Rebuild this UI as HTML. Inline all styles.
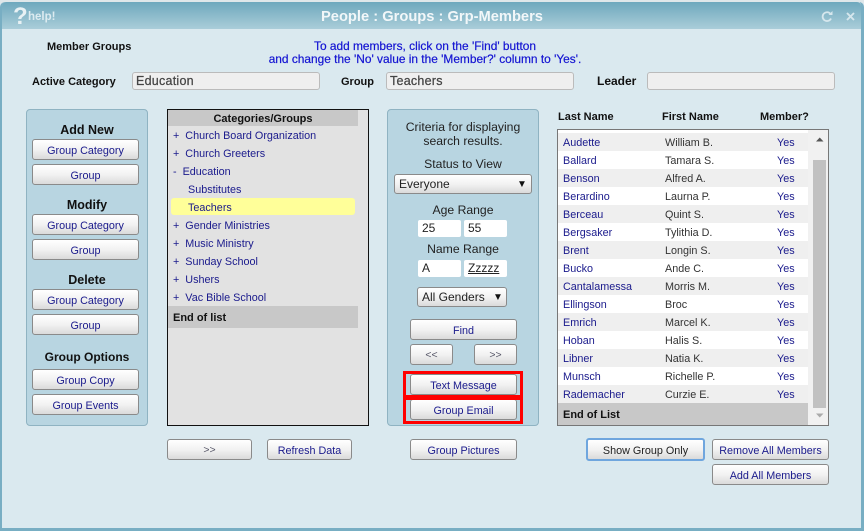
<!DOCTYPE html>
<html><head><meta charset="utf-8">
<style>
html,body{margin:0;padding:0}
body{width:864px;height:531px;overflow:hidden;background:#dae9ef;position:relative;font-family:"Liberation Sans",sans-serif;font-size:12px;color:#111}
div,span{position:absolute;box-sizing:border-box;white-space:nowrap}
.b{height:21px;border:1px solid #8a8a8a;border-radius:3px;background:linear-gradient(#fff,#f2f2f2 50%,#dadada);color:#1a1a8c;text-align:center;line-height:22px;font-size:10.8px}
.b.s{font-size:10.5px;color:#556;line-height:21px}
.p{background:#b8d5e1;border:1px solid #8fb3c2;border-radius:4px}
.h{font-size:12.5px;font-weight:bold;text-align:center;color:#111}
.l{font-size:11px;font-weight:bold;color:#111}
.f{height:18px;background:#efefef;border:1px solid #bbb;border-radius:3px;color:#444;font-size:12.5px;line-height:16px;padding-left:3px;letter-spacing:.25px;-webkit-text-stroke:.25px #444}
.t{color:#1a1a8c;font-size:10.8px;line-height:14px;height:14px}
.c{text-align:center;color:#222;font-size:12.2px}
.i{background:#fff;border-radius:2px;height:17px;font-size:12px;line-height:17px;padding-left:4px;color:#222}
.r{left:1px;width:250px;height:18px;line-height:20px;font-size:10.8px;background:#efefef}
.r.w{background:#fff}
.r span{top:0;color:#1a1a8c}
.r span+span{left:107px;color:#333}
.r span+span+span{left:219px;color:#1a1a8c}
.r span:first-child{left:5px}
</style></head><body>
<div style="left:0;top:0;width:864px;height:3px;background:#dfe7ea"></div>
<div style="left:0;top:2px;width:864px;height:529px;border:solid #78aec3;border-width:0 3px 3px 2px;border-radius:5px 5px 0 0"></div>
<div style="left:2px;top:2px;width:859px;height:27px;background:linear-gradient(#6ea8bd,#aacdd9);border-radius:4px 4px 0 0"></div>
<div style="left:13px;top:6px;font-size:24px;font-weight:bold;color:#e8f1f4;line-height:22px">?</div>
<div style="left:28px;top:10px;font-size:11.5px;font-weight:bold;color:#dcebf0;line-height:14px">help!</div>
<div style="left:0;width:864px;top:9px;text-align:center;font-size:14.7px;font-weight:bold;color:#f2f7f9;line-height:17px">People : Groups : Grp-Members</div>
<svg style="position:absolute;left:820px;top:9px" width="38" height="16" viewBox="0 0 38 16"><path d="M10.800 5.400A4.400 4.400 0 1 0 11 9.500" fill="none" stroke="#d6e7ed" stroke-width="1.800"/><path d="M8.500 6h4V2z" fill="#d6e7ed"/><path d="M27 4l7 7M34 4l-7 7" stroke="#d6e7ed" stroke-width="1.900"/></svg>

<div class="l" style="left:47px;top:40px;line-height:14px">Member Groups</div>
<div style="left:175px;width:500px;top:40px;text-align:center;color:#1414d2;font-size:11.9px;line-height:13px;-webkit-text-stroke:.2px #1414d2">To add members, click on the 'Find' button<br>and change the 'No' value in the 'Member?' column to 'Yes'.</div>
<div class="l" style="left:32px;top:75px;line-height:14px">Active Category</div>
<div class="f" style="left:132px;top:72px;width:188px">Education</div>
<div class="l" style="left:341px;top:75px;line-height:14px">Group</div>
<div class="f" style="left:386px;top:72px;width:188px">Teachers</div>
<div class="l" style="left:597px;top:74px;line-height:14px;font-size:12px">Leader</div>
<div class="f" style="left:647px;top:72px;width:188px"></div>

<div class="p" style="left:26px;top:109px;width:122px;height:317px"></div>
<div class="h" style="left:26px;width:122px;top:123px;line-height:14px">Add New</div>
<div class="b" style="left:32px;top:139px;width:107px">Group Category</div>
<div class="b" style="left:32px;top:164px;width:107px">Group</div>
<div class="h" style="left:26px;width:122px;top:198px;line-height:14px">Modify</div>
<div class="b" style="left:32px;top:214px;width:107px">Group Category</div>
<div class="b" style="left:32px;top:239px;width:107px">Group</div>
<div class="h" style="left:26px;width:122px;top:273px;line-height:14px">Delete</div>
<div class="b" style="left:32px;top:289px;width:107px">Group Category</div>
<div class="b" style="left:32px;top:314px;width:107px">Group</div>
<div class="h" style="left:26px;width:122px;top:350px;line-height:14px;font-size:12px">Group Options</div>
<div class="b" style="left:32px;top:369px;width:107px">Group Copy</div>
<div class="b" style="left:32px;top:394px;width:107px">Group Events</div>

<div style="left:167px;top:109px;width:202px;height:317px;background:#e2e2e2;border:1px solid #111"></div>
<div style="left:168px;top:110px;width:190px;height:16px;background:#c8c8c8;text-align:center;font-size:11px;font-weight:bold;line-height:18px">Categories/Groups</div>
<div class="t" style="left:173px;top:129px">+&nbsp; Church Board Organization</div>
<div class="t" style="left:173px;top:147px">+&nbsp; Church Greeters</div>
<div class="t" style="left:173px;top:165px">-&nbsp; Education</div>
<div class="t" style="left:188px;top:183px">Substitutes</div>
<div style="left:171px;top:198px;width:184px;height:17px;background:#ffff99;border-radius:3px"></div>
<div class="t" style="left:188px;top:201px">Teachers</div>
<div class="t" style="left:173px;top:219px">+&nbsp; Gender Ministries</div>
<div class="t" style="left:173px;top:237px">+&nbsp; Music Ministry</div>
<div class="t" style="left:173px;top:255px">+&nbsp; Sunday School</div>
<div class="t" style="left:173px;top:273px">+&nbsp; Ushers</div>
<div class="t" style="left:173px;top:291px">+&nbsp; Vac Bible School</div>
<div style="left:168px;top:306px;width:190px;height:22px;background:#c8c8c8;font-size:11px;font-weight:bold;line-height:24px;padding-left:5px">End of list</div>

<div class="p" style="left:387px;top:109px;width:152px;height:317px"></div>
<div class="c" style="left:387px;width:152px;top:120px;line-height:14px">Criteria for displaying<br>search results.</div>
<div class="c" style="left:387px;width:152px;top:157px;line-height:14px">Status to View</div>
<div class="b" style="left:394px;top:174px;width:138px;height:20px;color:#222;text-align:left;padding-left:4px;font-size:12px;line-height:18px">Everyone<span style="left:122px;top:1px;font-size:10px;color:#111">▼</span></div>
<div class="c" style="left:387px;width:152px;top:203px;line-height:14px">Age Range</div>
<div class="i" style="left:418px;top:220px;width:43px">25</div>
<div class="i" style="left:464px;top:220px;width:43px">55</div>
<div class="c" style="left:387px;width:152px;top:242px;line-height:14px">Name Range</div>
<div class="i" style="left:418px;top:260px;width:43px">A</div>
<div class="i" style="left:464px;top:260px;width:43px;text-decoration:underline">Zzzzz</div>
<div class="b" style="left:417px;top:287px;width:90px;height:20px;color:#222;text-align:left;padding-left:4px;font-size:12px;line-height:18px">All Genders<span style="left:75px;top:1px;font-size:10px;color:#111">▼</span></div>
<div class="b" style="left:410px;top:319px;width:107px">Find</div>
<div class="b s" style="left:410px;top:344px;width:43px">&lt;&lt;</div>
<div class="b s" style="left:474px;top:344px;width:43px">&gt;&gt;</div>
<div class="b" style="left:410px;top:374px;width:107px">Text Message</div>
<div class="b" style="left:410px;top:399px;width:107px">Group Email</div>
<div style="left:403px;top:371px;width:120px;height:27px;border:3px solid #f00"></div>
<div style="left:403px;top:397px;width:120px;height:27px;border:3px solid #f00"></div>
<div class="b" style="left:410px;top:439px;width:107px">Group Pictures</div>

<div class="l" style="left:558px;top:110px;line-height:14px">Last Name</div>
<div class="l" style="left:662px;top:110px;line-height:14px">First Name</div>
<div class="l" style="left:760px;top:110px;line-height:14px">Member?</div>

<div style="left:557px;top:129px;width:272px;height:297px;background:#f1f1f1;border:1px solid #777"></div>
<div style="left:558px;top:130px;width:250px;height:3px;background:#fff"></div>
<div style="left:558px;top:133px;width:250px;height:292px">
<div class="r" style="left:0;top:0"><span>Audette</span><span>William B.</span><span>Yes</span></div>
<div class="r w" style="left:0;top:18px"><span>Ballard</span><span>Tamara S.</span><span>Yes</span></div>
<div class="r" style="left:0;top:36px"><span>Benson</span><span>Alfred A.</span><span>Yes</span></div>
<div class="r w" style="left:0;top:54px"><span>Berardino</span><span>Laurna P.</span><span>Yes</span></div>
<div class="r" style="left:0;top:72px"><span>Berceau</span><span>Quint S.</span><span>Yes</span></div>
<div class="r w" style="left:0;top:90px"><span>Bergsaker</span><span>Tylithia D.</span><span>Yes</span></div>
<div class="r" style="left:0;top:108px"><span>Brent</span><span>Longin S.</span><span>Yes</span></div>
<div class="r w" style="left:0;top:126px"><span>Bucko</span><span>Ande C.</span><span>Yes</span></div>
<div class="r" style="left:0;top:144px"><span>Cantalamessa</span><span>Morris M.</span><span>Yes</span></div>
<div class="r w" style="left:0;top:162px"><span>Ellingson</span><span>Broc</span><span>Yes</span></div>
<div class="r" style="left:0;top:180px"><span>Emrich</span><span>Marcel K.</span><span>Yes</span></div>
<div class="r w" style="left:0;top:198px"><span>Hoban</span><span>Halis S.</span><span>Yes</span></div>
<div class="r" style="left:0;top:216px"><span>Libner</span><span>Natia K.</span><span>Yes</span></div>
<div class="r w" style="left:0;top:234px"><span>Munsch</span><span>Richelle P.</span><span>Yes</span></div>
<div class="r" style="left:0;top:252px"><span>Rademacher</span><span>Curzie E.</span><span>Yes</span></div>
<div style="left:0;top:270px;width:250px;height:22px;background:#c8c8c8;font-size:11px;font-weight:bold;line-height:24px;padding-left:5px">End of List</div>
</div>
<div style="left:813px;top:160px;width:13px;height:248px;background:#c1c1c1"></div>
<svg style="position:absolute;left:813px;top:134px" width="14" height="288" viewBox="0 0 14 288"><path d="M3 7.500h7.500L6.750 3.500z" fill="#555"/><path d="M3 279.500h7.500L6.750 283.500z" fill="#aaa"/></svg>

<div class="b s" style="left:167px;top:439px;width:85px">&gt;&gt;</div>
<div class="b" style="left:267px;top:439px;width:85px">Refresh Data</div>
<div class="b" style="left:586px;top:438px;width:119px;height:23px;border:2px solid #6fa6de;line-height:22px;color:#222">Show Group Only</div>
<div class="b" style="left:712px;top:439px;width:117px">Remove All Members</div>
<div class="b" style="left:712px;top:464px;width:117px">Add All Members</div>
</body></html>
